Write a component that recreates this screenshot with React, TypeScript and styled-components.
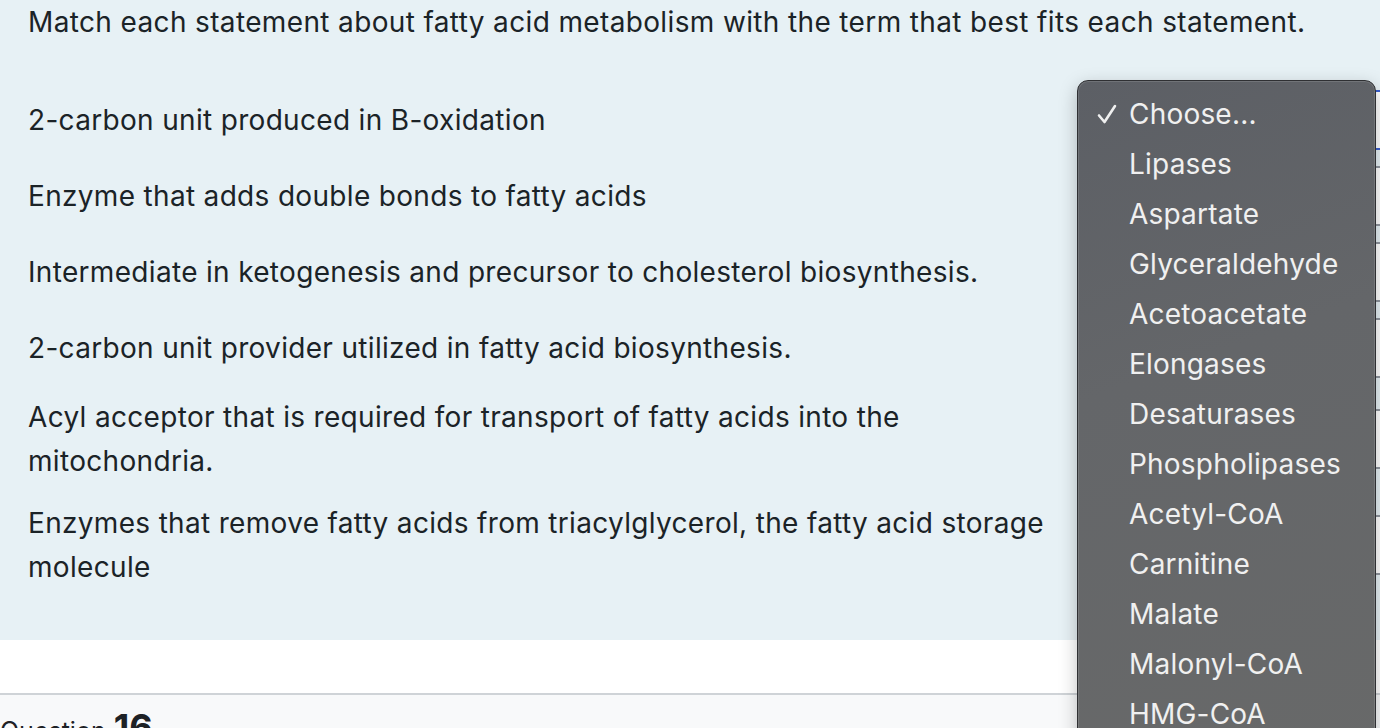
import React from 'react';
import styled, { createGlobalStyle } from 'styled-components';

const GlobalStyle = createGlobalStyle`
  html, body {
    margin: 0;
    padding: 0;
    background: #f8f9fa;
    overflow: hidden;
  }
  body {
    font-family: Inter, "Noto Sans", "Liberation Sans", sans-serif;
    color: #1b2327;
  }
`;

const Page = styled.div`
  position: relative;
  width: 1380px;
  height: 728px;
  overflow: hidden;
`;

const QuestionPanel = styled.div`
  background: #e7f1f5;
  padding: 0 0 50px 28px;
`;

const Prompt = styled.div`
  font-size: 28px;
  line-height: 44px;
  letter-spacing: 0.36px;
`;

const Rows = styled.div`
  margin-top: 46px;
  display: flex;
  flex-direction: column;
  gap: 16px;
`;

const Row = styled.div`
  display: flex;
  align-items: center;
  min-height: 60px;
`;

const Statement = styled.div`
  flex: 0 0 1050px;
  font-size: 28px;
  line-height: 44px;
  padding: 1px 0;
  letter-spacing: 0.32px;
`;

const Select = styled.div<{ $focused?: boolean }>`
  flex: 0 0 340px;
  height: 60px;
  box-sizing: border-box;
  background: #ffffff;
  border: 2px solid ${(p) => (p.$focused ? '#3a5fd0' : '#8f959e')};
  border-radius: 6px;
`;

const Spacer = styled.div`
  height: 53px;
  background: #ffffff;
  border-bottom: 2px solid #cfd3d7;
`;

const NextQuestion = styled.div`
  padding: 10px 0 0 0;
  display: flex;
  align-items: baseline;
  gap: 8px;
  color: #1d2125;
`;

const NextLabel = styled.span`
  font-size: 25px;
`;

const NextNumber = styled.span`
  font-size: 36px;
  font-weight: 700;
`;

const Menu = styled.div`
  position: absolute;
  left: 1077px;
  top: 80px;
  width: 299px;
  height: 700px;
  box-sizing: border-box;
  padding-top: 8px;
  border: 1px solid #2f3033;
  border-radius: 11px;
  background: linear-gradient(160deg, #5c5f65 0%, #646669 40%, #686969 100%);
  box-shadow: inset 0 0 0 1px rgba(255, 255, 255, 0.12), 0 6px 18px rgba(0, 0, 0, 0.25);
`;

const MenuItem = styled.div`
  position: relative;
  height: 50px;
  display: flex;
  align-items: center;
  padding-left: 51px;
  font-size: 28px;
  color: #f0f0f0;
  letter-spacing: 0.2px;
`;

const Check = styled.svg`
  position: absolute;
  left: 19px;
  top: 15px;
`;

const statements: string[][] = [
  ['2-carbon unit produced in B-oxidation'],
  ['Enzyme that adds double bonds to fatty acids'],
  ['Intermediate in ketogenesis and precursor to cholesterol biosynthesis.'],
  ['2-carbon unit provider utilized in fatty acid biosynthesis.'],
  ['Acyl acceptor that is required for transport of fatty acids into the', 'mitochondria.'],
  ['Enzymes that remove fatty acids from triacylglycerol, the fatty acid storage', 'molecule'],
];

const options = [
  'Choose...',
  'Lipases',
  'Aspartate',
  'Glyceraldehyde',
  'Acetoacetate',
  'Elongases',
  'Desaturases',
  'Phospholipases',
  'Acetyl-CoA',
  'Carnitine',
  'Malate',
  'Malonyl-CoA',
  'HMG-CoA',
];

export default function App() {
  return (
    <Page>
      <GlobalStyle />
      <QuestionPanel>
        <Prompt>
          Match each statement about fatty acid metabolism with the term that best fits each statement.
        </Prompt>
        <Rows>
          {statements.map((lines, i) => (
            <Row key={i}>
              <Statement>
                {lines.map((l, j) => (
                  <div key={j}>{l}</div>
                ))}
              </Statement>
              <Select $focused={i === 0} />
            </Row>
          ))}
        </Rows>
      </QuestionPanel>
      <Spacer />
      <NextQuestion>
        <NextLabel>Question</NextLabel>
        <NextNumber>16</NextNumber>
      </NextQuestion>

      <Menu>
        {options.map((o, i) => (
          <MenuItem key={o}>
            {i === 0 && (
              <Check width="20" height="20" viewBox="0 0 20 20">
                <path
                  d="M2 11.5 L7.5 18 L18 2"
                  fill="none"
                  stroke="#f0f0f0"
                  strokeWidth="2.6"
                  strokeLinecap="round"
                  strokeLinejoin="round"
                />
              </Check>
            )}
            {o}
          </MenuItem>
        ))}
      </Menu>
    </Page>
  );
}
